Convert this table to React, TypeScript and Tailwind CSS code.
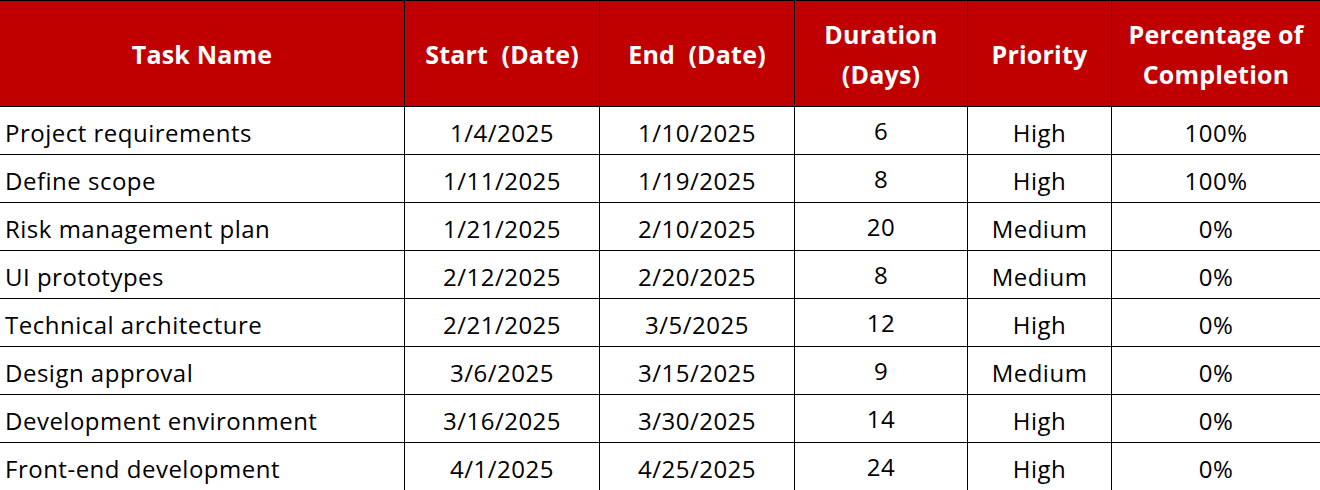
import React from "react";

type Task = {
  name: string;
  start: string;
  end: string;
  days: number;
  priority: string;
  done: string;
};

const tasks: Task[] = [
  { name: "Project requirements", start: "1/4/2025", end: "1/10/2025", days: 6, priority: "High", done: "100%" },
  { name: "Define scope", start: "1/11/2025", end: "1/19/2025", days: 8, priority: "High", done: "100%" },
  { name: "Risk management plan", start: "1/21/2025", end: "2/10/2025", days: 20, priority: "Medium", done: "0%" },
  { name: "UI prototypes", start: "2/12/2025", end: "2/20/2025", days: 8, priority: "Medium", done: "0%" },
  { name: "Technical architecture", start: "2/21/2025", end: "3/5/2025", days: 12, priority: "High", done: "0%" },
  { name: "Design approval", start: "3/6/2025", end: "3/15/2025", days: 9, priority: "Medium", done: "0%" },
  { name: "Development environment", start: "3/16/2025", end: "3/30/2025", days: 14, priority: "High", done: "0%" },
  { name: "Front-end development", start: "4/1/2025", end: "4/25/2025", days: 24, priority: "High", done: "0%" },
];

const headers = [
  ["Task Name"],
  ["Start  (Date)"],
  ["End  (Date)"],
  ["Duration", "(Days)"],
  ["Priority"],
  ["Percentage of", "Completion"],
];

const grid = "grid grid-cols-[405px_195px_195px_173px_144px_208px]";

export default function App() {
  return (
    <div className="w-[1320px] h-[490px] overflow-hidden bg-white font-['Open_Sans',sans-serif] text-black">
      {/* Header */}
      <div className={`${grid} h-[107px] border-t border-black bg-[#c00000]`}>
        {headers.map((lines, i) => (
          <div
            key={i}
            className={`flex flex-col items-center justify-center border-b border-black text-white font-bold text-[25px] tracking-[0.2px] leading-[40px] whitespace-pre ${
              i < 5 ? "border-r" : ""
            }`}
          >
            {lines.map((l) => (
              <span key={l}>{l}</span>
            ))}
          </div>
        ))}
      </div>

      {/* Rows */}
      {tasks.map((t) => (
        <div key={t.name} className={`${grid} h-[48px] text-[24px] tracking-[0.5px]`}>
          <div className="flex items-center pl-[5px] pt-[4px] border-r border-b border-black">{t.name}</div>
          <div className="flex items-center justify-center pt-[4px] border-r border-b border-black">{t.start}</div>
          <div className="flex items-center justify-center pt-[4px] border-r border-b border-black">{t.end}</div>
          <div className="flex items-center justify-center border-r border-b border-black">{t.days}</div>
          <div className="flex items-center justify-center pt-[4px] border-r border-b border-black">{t.priority}</div>
          <div className="flex items-center justify-center pt-[4px] border-b border-black">{t.done}</div>
        </div>
      ))}
    </div>
  );
}
